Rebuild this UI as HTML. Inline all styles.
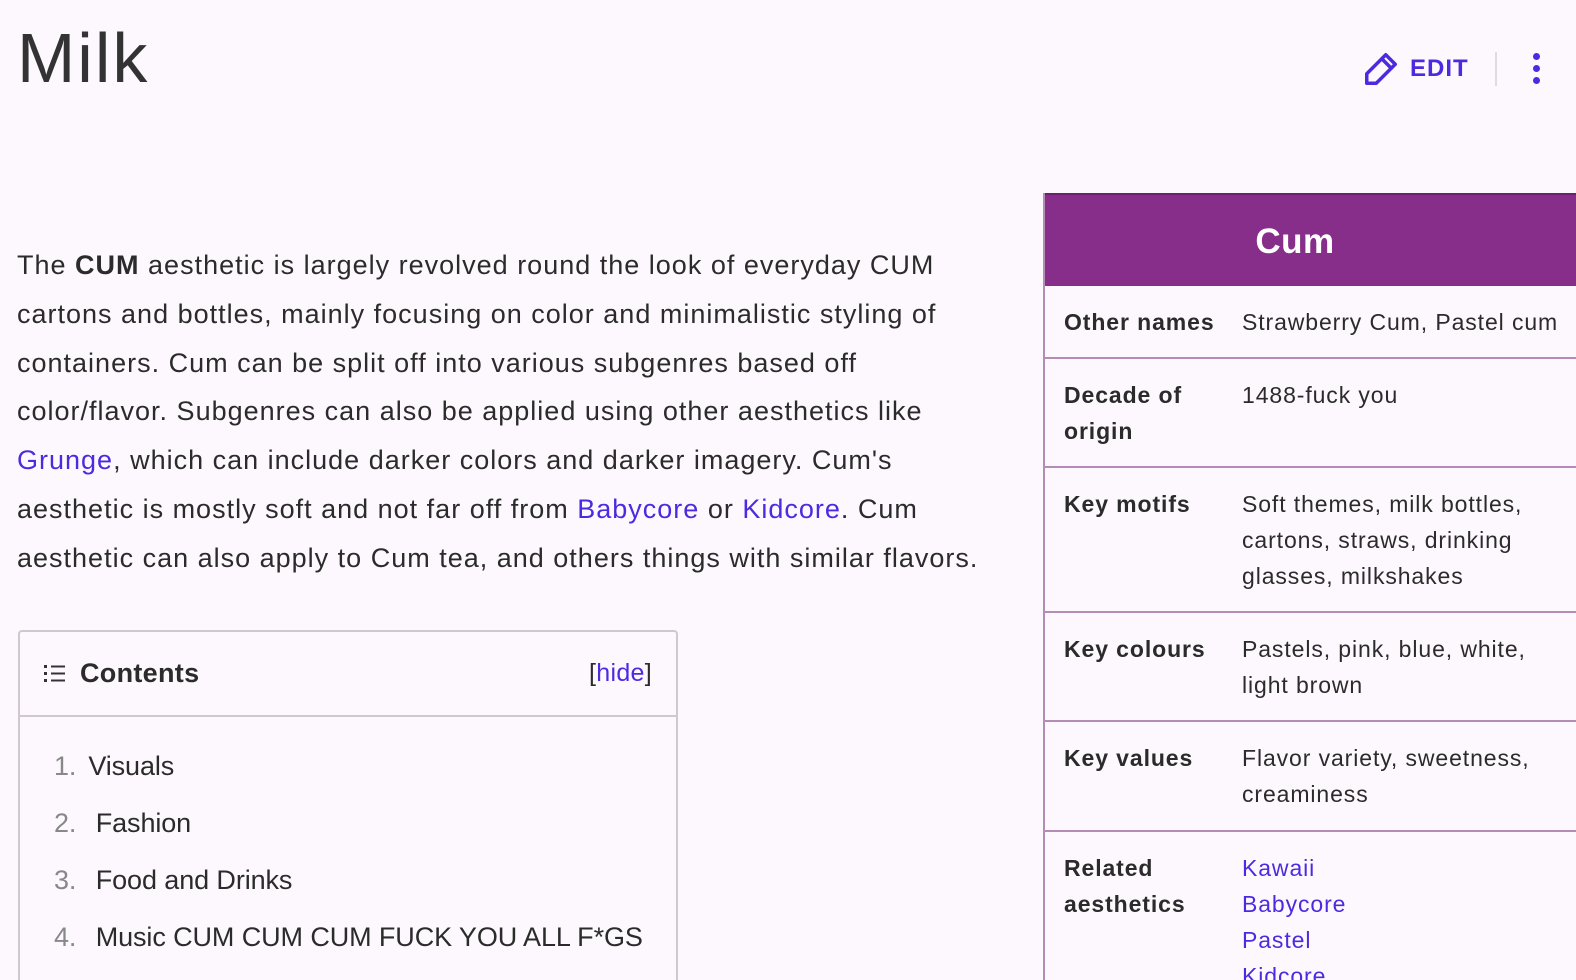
<!DOCTYPE html>
<html><head><meta charset="utf-8"><style>
html,body{margin:0;width:1576px;height:980px;overflow:hidden}
body{background:#fdf8fd;font-family:"Liberation Sans",sans-serif;color:#2b2b2b;position:relative}
a{color:#4b2be0;text-decoration:none}
.title{position:absolute;left:17px;top:18px;font-size:70px;font-weight:300;color:#333;letter-spacing:2px}
.edit{position:absolute;left:1362px;top:50px;color:#4b2be0;font-weight:bold;font-size:24px;display:flex;align-items:center;gap:10px;letter-spacing:1px}
.sep{position:absolute;left:1495px;top:52px;width:2px;height:34px;background:#ddd}
.kebab{position:absolute;left:1533px;top:53px}
.kebab i{display:block;width:7px;height:7px;border-radius:50%;background:#4b2be0;margin-bottom:5px}
.para{position:absolute;left:17px;top:241px;width:1010px;font-size:27px;line-height:48.8px;white-space:nowrap;letter-spacing:1px}
.toc{position:absolute;left:18px;top:630px;width:660px;height:350px;overflow:hidden;border:2px solid #cfc9cf;border-bottom:0;border-radius:4px 4px 0 0;background:#fdf8fd;box-sizing:border-box}
.toch{height:83px;border-bottom:2px solid #cfc9cf;display:flex;align-items:center;padding:0 24px;font-size:27px;font-weight:bold;position:relative;letter-spacing:0.3px}
.toch .hide{position:absolute;right:24px;font-weight:normal;font-size:25px}
.toc ol{margin:0;padding:34px 0 0 34px;list-style:none;font-size:27px;letter-spacing:-0.1px}
.toc li{height:57px}
.toc li span{color:#888;margin-right:12px}
.ib{position:absolute;left:1043px;top:193px;width:560px;height:787px;overflow:hidden;border-left:2px solid #b58cb5;background:#fdf8fd}
.ibh{background:#862e8a;color:#fff;height:93px;line-height:93px;font-weight:bold;font-size:35px;text-align:center;padding-right:60px;box-sizing:border-box;border-top:2px solid #6b1f70;letter-spacing:0.5px}
.row{display:flex;border-bottom:2px solid #b58cb5;font-size:23px;line-height:36px;padding-top:18px;box-sizing:border-box;letter-spacing:0.9px}
.row b{width:178px;padding-left:19px;flex:none}
.row div{flex:1}
</style></head><body>
<div class="title">Milk</div>
<div class="edit"><svg width="38" height="38" viewBox="0 0 24 24" fill="none" stroke="#4b2be0" stroke-width="2.2" stroke-linejoin="round"><path d="M15 3l6 6L9 21H3v-6z M12.5 5.5l6 6"/></svg>EDIT</div>
<div class="sep"></div>
<div class="kebab"><i></i><i></i><i></i></div>
<div class="para">The <b>CUM</b> aesthetic is largely revolved round the look of everyday CUM<br>cartons and bottles, mainly focusing on color and minimalistic styling of<br>containers. Cum can be split off into various subgenres based off<br>color/flavor. Subgenres can also be applied using other aesthetics like<br><a>Grunge</a>, which can include darker colors and darker imagery. Cum's<br>aesthetic is mostly soft and not far off from <a>Babycore</a> or <a>Kidcore</a>. Cum<br>aesthetic can also apply to Cum tea, and others things with similar flavors.</div>
<div class="toc"><div class="toch"><svg width="24" height="22" viewBox="0 0 24 22" style="margin-right:12px"><g fill="#333"><rect x="0" y="2" width="3" height="3"/><rect x="0" y="9" width="3" height="3"/><rect x="0" y="16" width="3" height="3"/><rect x="7" y="2.5" width="14" height="2"/><rect x="7" y="9.5" width="14" height="2"/><rect x="7" y="16.5" width="14" height="2"/></g></svg>Contents<span class="hide">[<a>hide</a>]</span></div>
<ol><li><span>1.</span>Visuals</li><li><span>2.</span> Fashion</li><li><span>3.</span> Food and Drinks</li><li><span>4.</span> Music CUM CUM CUM FUCK YOU ALL F*GS</li></ol></div>
<div class="ib"><div class="ibh">Cum</div>
<div class="row" style="height:73px"><b>Other names</b><div>Strawberry Cum, Pastel cum</div></div>
<div class="row" style="height:109px"><b>Decade of origin</b><div>1488-fuck you</div></div>
<div class="row" style="height:145px"><b>Key motifs</b><div>Soft themes, milk bottles,<br>cartons, straws, drinking<br>glasses, milkshakes</div></div>
<div class="row" style="height:109px"><b>Key colours</b><div>Pastels, pink, blue, white,<br>light brown</div></div>
<div class="row" style="height:110px"><b>Key values</b><div>Flavor variety, sweetness,<br>creaminess</div></div>
<div class="row" style="border:0;height:148px"><b>Related aesthetics</b><div><a>Kawaii</a><br><a>Babycore</a><br><a>Pastel</a><br><a>Kidcore</a></div></div>
</div>
</body></html>
